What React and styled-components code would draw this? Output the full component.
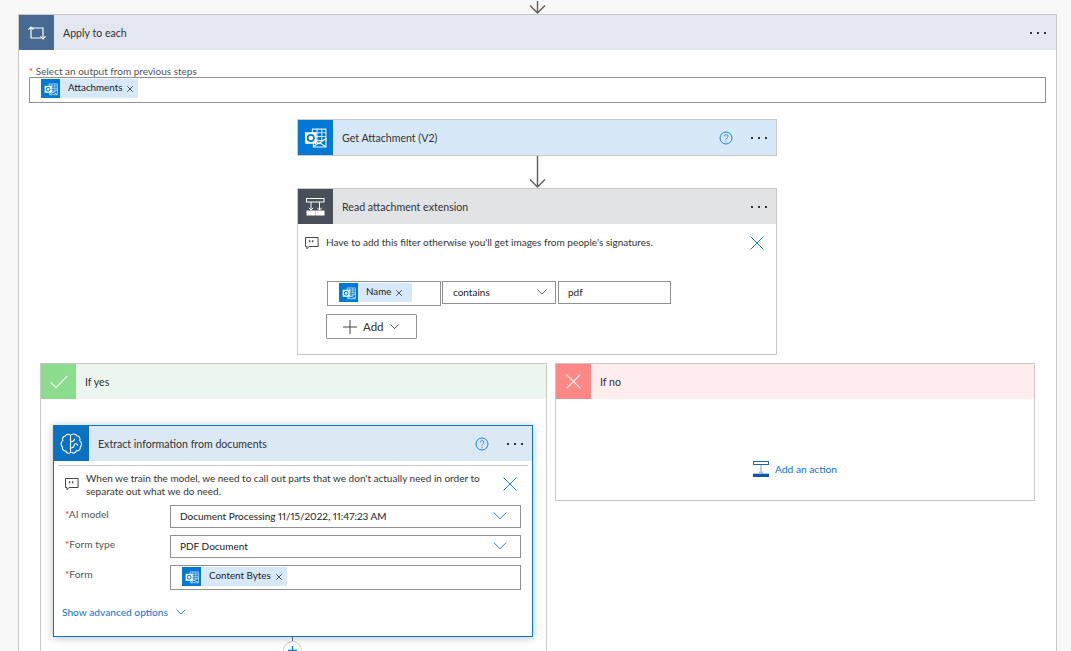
import React from 'react';
import styled, { createGlobalStyle } from 'styled-components';

const GlobalStyle = createGlobalStyle`
  html, body {
    margin: 0;
    padding: 0;
    background: #f8f8f8;
    font-family: Lato, "Open Sans", "Liberation Sans", sans-serif;
    font-variant-numeric: proportional-nums;
    color: #333;
  }
`;

const LINK = '#0b6fdc';
const ICON_BLUE = '#1f80e6';

const OutlookIcon = ({ size = 14 }) => (
  <svg width={size} height={size} viewBox="0 0 22 22" fill="none">
    <path d="M8 3h13v11H8z" stroke="#fff" strokeWidth="1" opacity=".9" />
    <path d="M12.5 3v11M17 3v11M8 6.5h13M8 10h13" stroke="#fff" strokeWidth="1" opacity=".8" />
    <path d="M9 13l5 4 7-5v8H9z" fill="#0078d4" stroke="#fff" strokeWidth="1" />
    <path d="M9 20l5-4M21 20l-6-4" stroke="#fff" strokeWidth="1" />
    <rect x="1" y="6" width="11" height="11" fill="#fff" />
    <circle cx="6.5" cy="11.5" r="3" stroke="#0078d4" strokeWidth="1.6" />
  </svg>
);

const LoopIcon = () => (
  <svg width="18" height="14" viewBox="0 0 18 14" fill="none" stroke="#fff" strokeWidth="1.2">
    <path d="M3 1v11h10.5M3 2h12v11" />
    <path d="M.4 3.6L3 1l2.6 2.6M12.4 10.4L15 13l2.6-2.6" />
  </svg>
);

const ConditionIcon = () => (
  <svg width="20" height="20" viewBox="0 0 20 20" fill="none" stroke="#fff" strokeWidth="1">
    <rect x=".5" y="1.5" width="17.5" height="3.5" />
    <path d="M5 5v8M13.5 5v8M2.8 10.8L5 13l2.2-2.2M11.3 10.8l2.2 2.2 2.2-2.2" />
    <rect x="1" y="14" width="8" height="4" fill="#fff" />
    <rect x="10" y="14" width="8" height="4" fill="#fff" />
  </svg>
);

const CheckIcon = () => (
  <svg width="18" height="14" viewBox="0 0 18 14" fill="none" stroke="#fff" strokeWidth="1.1">
    <path d="M.6 7.2l5.4 5.6L17.4.8" />
  </svg>
);

const CrossIcon = ({ size = 14, color = '#fff', weight = 1 }) => (
  <svg width={size} height={size} viewBox="0 0 14 14" fill="none" stroke={color} strokeWidth={weight}>
    <path d="M.5.5l13 13M13.5.5l-13 13" />
  </svg>
);

const BrainIcon = () => (
  <svg width="23" height="22" viewBox="0 0 23 22" fill="none" stroke="#fff" strokeWidth="1.1">
    <path d="M10.5 2.4C9.2.8 6.4.8 5.4 3 3 3.2 1.8 5.6 2.8 7.6 .6 9 .4 12.2 2.4 13.8c-.6 2.4 1.2 4.4 3.4 4.2 .8 2.4 3.4 3 4.7 1.4z" />
    <path d="M10.5 2.4c1.4-1.8 5-2 6.4.4 2.6.2 3.6 2.8 2.8 4.8 2.2 1.4 2.4 4.6.6 6.2.4 2.6-1.6 4.4-3.8 4-1 2.4-3.6 3-5.2 1.4" />
    <path d="M10.5 8.5c2.4.4 4-.8 4.2-3M14.4 11c1.4-.6 3 .2 3.4 1.6M10.5 15c2 .2 3.6-1 3.9-3.6" />
  </svg>
);

const CommentIcon = () => (
  <svg width="14" height="14" viewBox="0 0 14 14" fill="none">
    <path d="M.5 1.5h12.6v9H4L2 12.8V10.5H.5z" stroke="#444" strokeWidth="1" />
    <path d="M4.6 4.2v2M7.6 4.2v2" stroke="#444" strokeWidth="1.4" />
  </svg>
);

const HelpIcon = () => (
  <svg width="14" height="14" viewBox="0 0 14 14" fill="none">
    <circle cx="7" cy="7" r="6" stroke={ICON_BLUE} strokeWidth="1" />
    <path d="M5.2 5.4c0-2.3 3.7-2.3 3.7 0 0 1.5-1.9 1.5-1.9 3.1" stroke={ICON_BLUE} strokeWidth="1" />
    <path d="M7 9.6v1.2" stroke={ICON_BLUE} strokeWidth="1" />
  </svg>
);

const Chevron = ({ width = 14, color = ICON_BLUE }) => (
  <svg width={width} height={width / 2 + 1} viewBox="0 0 12 7" fill="none" stroke={color} strokeWidth={12 / width}>
    <path d="M.5.5L6 6l5.5-5.5" />
  </svg>
);

const AddActionIcon = () => (
  <svg width="16" height="16" viewBox="0 0 16 16" fill="none">
    <rect x=".5" y=".5" width="15" height="3" stroke="#1d66b5" />
    <path d="M8 4v8.5M5.8 10.5L8 12.7l2.2-2.2" stroke="#6d9fd6" />
    <path d="M0 12.5h16" stroke="#a9c7e8" />
    <rect y="13" width="16" height="3" fill="#0a5aa8" />
  </svg>
);

const Page = styled.div`
  height: 100vh;
  overflow: hidden;
  box-sizing: border-box;
  display: flex;
  flex-direction: column;
  align-items: flex-start;
  padding-left: 18px;
`;

const Connector = styled.div`
  width: 17px;
  height: ${props => props.$height}px;
  display: flex;
  align-items: flex-end;
  align-self: center;
  flex-shrink: 0;
`;

const Arrow = ({ height }) => (
  <Connector $height={height}>
    <svg width="17" height={height} viewBox={`0 0 17 ${height}`} fill="none" stroke="#605e5c" strokeWidth="1.4">
      <path d={`M8.5 0v${height - 1}M1 ${height - 8.5}l7.5 7.5 7.5-7.5`} />
    </svg>
  </Connector>
);

const TopArrow = styled.div`
  width: 1039px;
  height: 14px;
  display: flex;
  justify-content: center;
  flex-shrink: 0;
`;

const Scope = styled.section`
  width: 1039px;
  box-sizing: border-box;
  background: #fff;
  border: 1px solid #c8c8c8;
  flex-shrink: 0;
`;

const Header = styled.header`
  height: 35px;
  display: flex;
  align-items: center;
  background: ${props => props.$bg};
  flex-shrink: 0;
  align-self: stretch;
`;

const IconBlock = styled.div`
  width: 35px;
  height: 100%;
  display: flex;
  align-items: center;
  justify-content: center;
  background: ${props => props.$bg};
`;

const Title = styled.div`
  flex: 1;
  margin-left: 9px;
  font-size: 10.6px;
  line-height: 16px;
  color: #333;
  white-space: nowrap;
`;

const HelpButton = styled.div`
  display: flex;
  margin-right: 18px;
`;

const Dots = styled.div`
  display: flex;
  gap: 5px;
  margin-right: ${props => props.$right || 9}px;
  span {
    width: 2px;
    height: 2px;
    background: #333;
  }
`;

const More = ({ right }) => (
  <Dots $right={right}><span /><span /><span /></Dots>
);

const ScopeBody = styled.div`
  display: flex;
  flex-direction: column;
  align-items: center;
  padding: 15px 1px 0 0;
`;

const OutputField = styled.div`
  align-self: stretch;
  margin: 0 9px 0 10px;
`;

const OutputLabel = styled.div`
  font-size: 10px;
  line-height: 12px;
  color: #555;
  white-space: nowrap;
`;

const Star = styled.span`
  color: #e8343c;
`;

const TokenBox = styled.div`
  box-sizing: border-box;
  height: ${props => props.$height || 26}px;
  width: ${props => props.$width ? `${props.$width}px` : 'auto'};
  border: 1px solid #919191;
  display: flex;
  align-items: flex-start;
  padding: 1px 0 0 11px;
  background: #fff;
`;

const TokenWrap = styled.div`
  height: 19px;
  box-sizing: border-box;
  display: flex;
  align-items: center;
  background: #d7e8f8;
  font-size: 9.8px;
  line-height: 17px;
  color: #222;
  white-space: nowrap;
`;

const TokenLabel = styled.span`
  margin-bottom: 2px;
`;

const TokenIcon = styled.div`
  width: 19px;
  height: 19px;
  display: flex;
  align-items: center;
  justify-content: center;
  background: #0078d4;
  margin-right: 8px;
`;

const TokenClose = styled.span`
  display: flex;
  margin: 1px ${props => props.$tail || 5}px 0 5px;
`;

const Token = ({ label, tail }) => (
  <TokenWrap>
    <TokenIcon><OutlookIcon /></TokenIcon>
    <TokenLabel>{label}</TokenLabel>
    <TokenClose $tail={tail}><CrossIcon size={6} color="#111" weight={1.6} /></TokenClose>
  </TokenWrap>
);

const ActionCard = styled.article`
  width: 480px;
  box-sizing: border-box;
  background: #fff;
  border: 1px solid #c8c8c8;
  display: flex;
  flex-direction: column;
  flex-shrink: 0;
`;

const FilledCard = styled(ActionCard)`
  margin-top: ${props => props.$top || 0}px;
  height: ${props => props.$height}px;
`;

const CommentRow = styled.div`
  display: flex;
  align-items: flex-start;
  position: relative;
  font-size: 10px;
  line-height: 13px;
  color: #333;
`;

const ReadComment = styled(CommentRow)`
  padding: 12px 0 0 7px;
  gap: 7px;
`;

const ExtractComment = styled(CommentRow)`
  margin: 4px 4px 0;
  padding: 6px 0 0 7px;
  gap: 7px;
  border-top: 1px solid #c8c8c8;
  height: 33px;
  box-sizing: border-box;
`;

const CommentGlyph = styled.span`
  display: flex;
  margin-top: ${props => props.$top || 0}px;
`;

const CommentClose = styled.span`
  display: flex;
  position: absolute;
  right: ${props => props.$right}px;
  top: ${props => props.$top}px;
`;

const ConditionRow = styled.div`
  display: flex;
  align-items: flex-start;
  margin: 31px 0 0 29px;
  gap: 1px;
`;

const PlainField = styled.div`
  box-sizing: border-box;
  width: ${props => props.$width ? `${props.$width}px` : '100%'};
  height: 23px;
  border: 1px solid #919191;
  display: flex;
  align-items: center;
  justify-content: space-between;
  padding: 0 ${props => props.$right || 13}px 2px ${props => props.$pad || 9}px;
  font-size: 10px;
  color: #222;
  white-space: nowrap;
  margin-left: ${props => props.$left || 0}px;
`;

const AddButton = styled.div`
  box-sizing: border-box;
  width: 91px;
  height: 25px;
  margin: 8px 0 0 28px;
  border: 1px solid #919191;
  border-radius: 1px;
  display: flex;
  align-items: center;
  padding-left: 16px;
  gap: 6px;
  font-size: 11.5px;
  color: #333;
`;

const Plus = () => (
  <svg width="14" height="14" viewBox="0 0 14 14" stroke="#444" strokeWidth="1">
    <path d="M7 0v14M0 7h14" />
  </svg>
);

const Branches = styled.div`
  align-self: stretch;
  display: flex;
  gap: 8px;
  align-items: flex-start;
  margin: 8px 0 0 21px;
`;

const BranchYes = styled.div`
  width: 507px;
  height: 320px;
  box-sizing: border-box;
  border: 1px solid #c8c8c8;
  border-bottom: none;
  display: flex;
  flex-direction: column;
  align-items: flex-start;
  flex-shrink: 0;
`;

const BranchNo = styled.div`
  width: 480px;
  height: 138px;
  box-sizing: border-box;
  border: 1px solid #c8c8c8;
  flex-shrink: 0;
`;

const ExtractCard = styled(ActionCard)`
  height: 212px;
  margin: 26px 0 0 12px;
  border-color: #0078d4;
  box-shadow: 0 1px 8px rgba(0, 0, 0, .25);
`;

const Form = styled.div`
  display: grid;
  grid-template-columns: 105px 351px;
  row-gap: 7px;
  margin: 7px 0 0 11px;
`;

const FormLabel = styled.div`
  font-size: 10.2px;
  line-height: 13px;
  color: #555;
  padding-top: 3px;
  white-space: nowrap;
`;

const AdvancedLink = styled.div`
  display: flex;
  align-items: center;
  gap: 8px;
  margin: 16px 0 0 8px;
  font-size: 10.2px;
  color: ${LINK};
`;

const AddAction = styled.div`
  margin-top: 62px;
  display: flex;
  align-items: center;
  justify-content: center;
  gap: 6px;
  font-size: 10.2px;
  color: ${LINK};
`;

const InsertStep = styled.div`
  display: flex;
  flex-direction: column;
  align-items: center;
  flex-shrink: 0;
  margin-left: 242px;
`;

const InsertLine = styled.div`
  width: 1px;
  height: 4px;
  background: #605e5c;
`;

const InsertCircle = styled.div`
  width: 19px;
  height: 19px;
  box-sizing: border-box;
  border: 1px solid #c8c8c8;
  border-radius: 50%;
  display: flex;
  align-items: center;
  justify-content: center;
  background: #fff;
`;

export default function App() {
  return (
    <Page>
      <GlobalStyle />
      <TopArrow><Arrow height={13} /></TopArrow>
      <Scope>
        <Header $bg="#e3e7ef">
          <IconBlock $bg="#486991"><LoopIcon /></IconBlock>
          <Title>Apply to each</Title>
          <More right={10} />
        </Header>
        <ScopeBody>
          <OutputField>
            <OutputLabel><Star>*</Star> Select an output from previous steps</OutputLabel>
            <TokenBox><Token label="Attachments" /></TokenBox>
          </OutputField>
          <FilledCard $top={16}>
            <Header $bg="#d7e9f8">
              <IconBlock $bg="#0078d4"><OutlookIcon size={23} /></IconBlock>
              <Title>Get Attachment (V2)</Title>
              <HelpButton><HelpIcon /></HelpButton>
              <More />
            </Header>
          </FilledCard>
          <Arrow height={32} />
          <FilledCard $height={167}>
            <Header $bg="#e2e3e5">
              <IconBlock $bg="#484f58"><ConditionIcon /></IconBlock>
              <Title>Read attachment extension</Title>
              <More />
            </Header>
            <ReadComment>
              <CommentGlyph><CommentIcon /></CommentGlyph>
              Have to add this filter otherwise you'll get images from people's signatures.
              <CommentClose $right={12} $top={12}><CrossIcon color={ICON_BLUE} /></CommentClose>
            </ReadComment>
            <ConditionRow>
              <TokenBox $width={114} $height={25}><Token label="Name" tail={10} /></TokenBox>
              <PlainField $width={114} $right={8} $pad={10}>contains<Chevron width={10} color="#605e5c" /></PlainField>
              <PlainField $width={113} $left={1}>pdf</PlainField>
            </ConditionRow>
            <AddButton><Plus />Add<Chevron width={9} color="#444" /></AddButton>
          </FilledCard>
          <Branches>
            <BranchYes>
              <Header $bg="#edf6ee">
                <IconBlock $bg="#8bdc8d"><CheckIcon /></IconBlock>
                <Title>If yes</Title>
              </Header>
              <ExtractCard>
                <Header $bg="#dbe9f4">
                  <IconBlock $bg="#0a72c0"><BrainIcon /></IconBlock>
                  <Title>Extract information from documents</Title>
                  <HelpButton><HelpIcon /></HelpButton>
                  <More />
                </Header>
                <ExtractComment>
                  <CommentGlyph $top={5}><CommentIcon /></CommentGlyph>
                  <span>When we train the model, we need to call out parts that we don't actually need in order to<br />separate out what we do need.</span>
                  <CommentClose $right={11} $top={11}><CrossIcon color={ICON_BLUE} /></CommentClose>
                </ExtractComment>
                <Form>
                  <FormLabel><Star>*</Star>AI model</FormLabel>
                  <PlainField>Document Processing 11/15/2022, 11:47:23 AM<Chevron /></PlainField>
                  <FormLabel><Star>*</Star>Form type</FormLabel>
                  <PlainField>PDF Document<Chevron /></PlainField>
                  <FormLabel><Star>*</Star>Form</FormLabel>
                  <TokenBox $height={25}><Token label="Content Bytes" /></TokenBox>
                </Form>
                <AdvancedLink>Show advanced options<Chevron width={10} /></AdvancedLink>
              </ExtractCard>
              <InsertStep>
                <InsertLine />
                <InsertCircle>
                  <svg width="9" height="9" viewBox="0 0 9 9" stroke="#0078d4" strokeWidth="1.4"><path d="M4.5 0v9M0 4.5h9" /></svg>
                </InsertCircle>
              </InsertStep>
            </BranchYes>
            <BranchNo>
              <Header $bg="#ffecec">
                <IconBlock $bg="#ff8886"><CrossIcon size={15} /></IconBlock>
                <Title>If no</Title>
              </Header>
              <AddAction><AddActionIcon />Add an action</AddAction>
            </BranchNo>
          </Branches>
        </ScopeBody>
      </Scope>
    </Page>
  );
}
